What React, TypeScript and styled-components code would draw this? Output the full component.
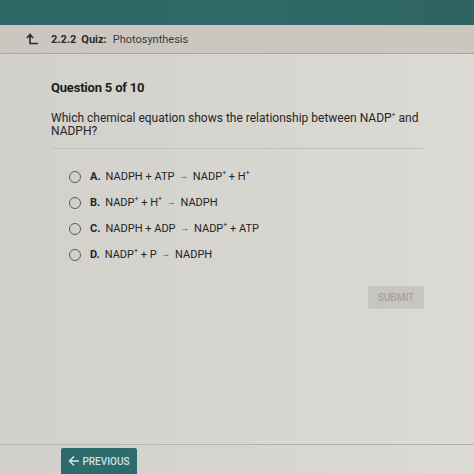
import * as React from "react";
import styled, { createGlobalStyle } from "styled-components";

const GlobalStyle = createGlobalStyle`
  html, body {
    margin: 0;
    padding: 0;
    background: #d5d3ce;
  }
  body {
    font-family: Roboto, "Liberation Sans", Arial, sans-serif;
    color: #1f1f1f;
  }
`;

type Option = {
  letter: string;
  parts: Array<React.ReactNode>;
};

const Sup = styled.sup`
  font-size: 7px;
  vertical-align: 5px;
  line-height: 0;
`;

const Arrow = () => <ArrowGlyph>→</ArrowGlyph>;

const options: Array<Option> = [
  {
    letter: "A.",
    parts: [
      "NADPH + ATP ",
      <Arrow key="a" />,
      " NADP",
      <Sup key="s1">+</Sup>,
      " + H",
      <Sup key="s2">+</Sup>,
    ],
  },
  {
    letter: "B.",
    parts: [
      "NADP",
      <Sup key="s1">+</Sup>,
      " + H",
      <Sup key="s2">+</Sup>,
      " ",
      <Arrow key="a" />,
      " NADPH",
    ],
  },
  {
    letter: "C.",
    parts: [
      "NADPH + ADP ",
      <Arrow key="a" />,
      " NADP",
      <Sup key="s1">+</Sup>,
      " + ATP",
    ],
  },
  {
    letter: "D.",
    parts: ["NADP", <Sup key="s1">+</Sup>, " + P ", <Arrow key="a" />, " NADPH"],
  },
];

export default function App() {
  return (
    <Screen>
      <GlobalStyle />
      <TopBar />
      <Header>
        <svg width="13" height="12" viewBox="0 0 13 12">
          <path
            d="M4 11 V2 M1 5 L4 1.5 L7 5 M4 10.5 H12"
            stroke="#2b2b2b"
            strokeWidth="1.6"
            fill="none"
          />
        </svg>
        <HeaderText>
          <b>2.2.2</b>
          <b>Quiz:</b>
          <span>Photosynthesis</span>
        </HeaderText>
      </Header>
      <Body>
        <Title>Question 5 of 10</Title>
        <Prompt>
          Which chemical equation shows the relationship between NADP
          <Sup>+</Sup> and
          <br />
          NADPH?
        </Prompt>
        <Divider />
        <Options>
          {options.map((opt) => (
            <OptionRow key={opt.letter}>
              <Radio />
              <Letter>{opt.letter}</Letter>
              <span>{opt.parts}</span>
            </OptionRow>
          ))}
        </Options>
        <SubmitRow>
          <SubmitButton disabled>SUBMIT</SubmitButton>
        </SubmitRow>
      </Body>
      <Footer>
        <PrevButton>
          <svg width="12" height="12" viewBox="0 0 12 12">
            <path
              d="M11 6 H1.5 M6 1.5 L1.5 6 L6 10.5"
              stroke="#d6e6e5"
              strokeWidth="1.5"
              fill="none"
            />
          </svg>
          PREVIOUS
        </PrevButton>
      </Footer>
    </Screen>
  );
}

const Screen = styled.div`
  width: 474px;
  height: 474px;
  overflow: hidden;
  display: flex;
  flex-direction: column;
  background: linear-gradient(90deg, #d2d0cb 0%, #d8d6d1 60%, #dcdad5 100%);
`;

const TopBar = styled.div`
  height: 25px;
  flex-shrink: 0;
  background: linear-gradient(90deg, #2d6664 0%, #2f6a68 50%, #2e6462 100%);
`;

const Header = styled.div`
  height: 28px;
  flex-shrink: 0;
  display: flex;
  align-items: center;
  gap: 12px;
  padding-left: 26px;
  background: #cbc7c0;
  border-bottom: 1.5px solid #a9a6a0;
`;

const HeaderText = styled.div`
  display: flex;
  gap: 5px;
  font-size: 11px;
  color: #2a2a2a;
  b {
    font-weight: 700;
  }
  span {
    color: #3a3a3a;
    margin-left: 1px;
  }
`;

const Body = styled.div`
  flex: 1;
  padding: 26px 51px 0 51px;
  display: flex;
  flex-direction: column;
`;

const Title = styled.div`
  font-size: 13px;
  font-weight: 700;
  color: #1c1c1c;
  letter-spacing: -0.2px;
`;

const Prompt = styled.div`
  margin-top: 17px;
  font-size: 12px;
  line-height: 13px;
  color: #262626;
`;

const Divider = styled.div`
  margin-top: 10px;
  height: 1px;
  width: 372px;
  background: #c3c1bc;
`;

const Options = styled.div`
  margin-top: 20px;
  padding-left: 18px;
  display: flex;
  flex-direction: column;
  gap: 11px;
`;

const OptionRow = styled.div`
  display: flex;
  align-items: center;
  height: 15px;
  font-size: 11px;
  color: #242424;
`;

const Radio = styled.span`
  width: 10px;
  height: 10px;
  border: 1.5px solid #5b5b5b;
  border-radius: 50%;
  margin-right: 9px;
  flex-shrink: 0;
`;

const Letter = styled.span`
  font-weight: 700;
  margin-right: 5px;
`;

const ArrowGlyph = styled.span`
  font-size: 9px;
  padding: 0 2px;
  color: #555;
  vertical-align: 1px;
`;

const SubmitRow = styled.div`
  margin-top: 24px;
  width: 373px;
  display: flex;
  justify-content: flex-end;
`;

const SubmitButton = styled.button`
  width: 56px;
  height: 23px;
  border: none;
  border-radius: 2px;
  background: #c7c5c0;
  color: #a3a19d;
  font-family: Roboto, "Liberation Sans", Arial, sans-serif;
  font-size: 10px;
  font-weight: 500;
  padding: 0;
`;

const Footer = styled.div`
  height: 26px;
  flex-shrink: 0;
  border-top: 1.5px solid #b5b3ae;
  padding: 3px 0 0 61px;
  display: flex;
  align-items: flex-start;
`;

const PrevButton = styled.button`
  width: 76px;
  height: 30px;
  border: none;
  border-radius: 2px;
  background: #2d6c6d;
  color: #cfe0df;
  font-family: Roboto, "Liberation Sans", Arial, sans-serif;
  font-size: 10px;
  font-weight: 500;
  display: flex;
  align-items: center;
  justify-content: center;
  gap: 2px;
  padding: 0 0 4px 0;
`;
